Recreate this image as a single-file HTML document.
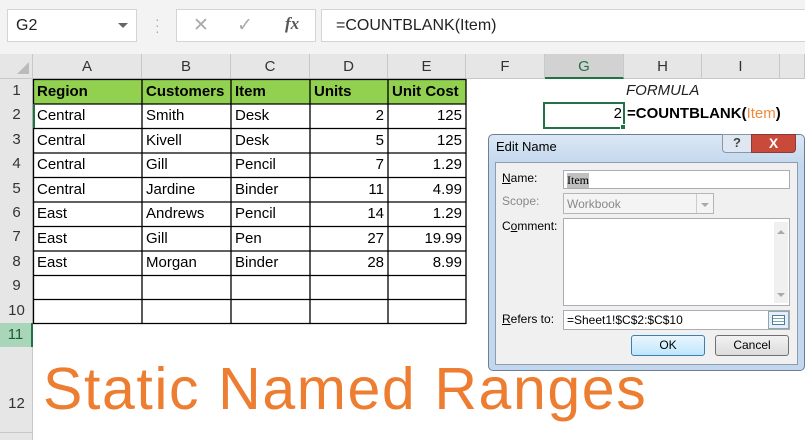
<!DOCTYPE html>
<html><head><style>
*{margin:0;padding:0;box-sizing:border-box}
body{width:805px;height:440px;overflow:hidden;background:#fff;font-family:"Liberation Sans",sans-serif;position:relative}
.a{position:absolute}
.hdr{background:#e6e6e6;color:#333;font-size:15px;text-align:center;border-right:1px solid #c8c8c8;border-bottom:1px solid #c8c8c8}
.c{position:absolute;font-size:15px;line-height:24px;white-space:nowrap;padding:0 4px;color:#000}
.r{text-align:right}
.g{font-weight:bold}
.dl{font-size:12px;color:#000;position:absolute}
</style></head><body>
<div class="a" style="left:0;top:0;width:805px;height:54px;background:#f3f3f3"></div>
<div class="a" style="left:7px;top:9px;width:130px;height:33px;background:#fff;border:1px solid #d4d4d4"></div>
<div class="a" style="left:16px;top:17px;font-size:16px;color:#222">G2</div>
<div class="a" style="left:118px;top:23px;width:0;height:0;border-left:5px solid transparent;border-right:5px solid transparent;border-top:5px solid #666"></div>
<div class="a" style="left:155px;top:16px;color:#aaa;font-size:14px;line-height:6px">·<br>·<br>·</div>
<div class="a" style="left:176px;top:9px;width:140px;height:33px;background:#fff;border:1px solid #d4d4d4"></div>
<div class="a" style="left:193px;top:14px;font-size:19px;color:#aaa">✕</div>
<div class="a" style="left:237px;top:14px;font-size:19px;color:#aaa">✓</div>
<div class="a" style="left:285px;top:14px;font-size:17px;color:#555;font-style:italic;font-family:'Liberation Serif',serif;font-weight:bold">fx</div>
<div class="a" style="left:321px;top:9px;width:490px;height:33px;background:#fff;border:1px solid #d4d4d4"></div>
<div class="a" style="left:336px;top:17px;font-size:16px;color:#222">=COUNTBLANK(Item)</div>
<div class="a hdr" style="left:0;top:54px;width:33px;height:25px"></div>
<div class="a" style="left:17px;top:62px;width:0;height:0;border-left:12px solid transparent;border-bottom:12px solid #bbb"></div>
<div class="a hdr" style="left:33px;top:54px;width:109px;height:25px;line-height:25px">A</div>
<div class="a hdr" style="left:142px;top:54px;width:89px;height:25px;line-height:25px">B</div>
<div class="a hdr" style="left:231px;top:54px;width:79px;height:25px;line-height:25px">C</div>
<div class="a hdr" style="left:310px;top:54px;width:78px;height:25px;line-height:25px">D</div>
<div class="a hdr" style="left:388px;top:54px;width:78px;height:25px;line-height:25px">E</div>
<div class="a hdr" style="left:466px;top:54px;width:79px;height:25px;line-height:25px">F</div>
<div class="a hdr" style="left:545px;top:54px;width:79px;height:25px;line-height:25px;background:#d2d2d2;border-bottom:2px solid #217346;color:#217346">G</div>
<div class="a hdr" style="left:624px;top:54px;width:78px;height:25px;line-height:25px">H</div>
<div class="a hdr" style="left:702px;top:54px;width:78px;height:25px;line-height:25px">I</div>
<div class="a hdr" style="left:780px;top:54px;width:25px;height:25px"></div>
<div class="a" style="left:0;top:79px;width:33px;height:361px;background:#e6e6e6;border-right:1px solid #c8c8c8"></div>
<div class="a" style="left:0;top:79px;width:33px;font-size:15px;color:#333;text-align:center;line-height:24.4px">1<br>2<br>3<br>4<br>5<br>6<br>7<br>8<br>9<br>10</div>
<div class="a" style="left:0;top:323px;width:33px;height:24px;background:#a9d5b8;border-right:2px solid #217346;text-align:center;font-size:15px;line-height:24px;color:#1a5e38">11</div>
<div class="a" style="left:0;top:395px;width:33px;text-align:center;font-size:15px;color:#333">12</div>
<div class="a" style="left:0;top:432px;width:33px;border-top:1px solid #c8c8c8"></div>
<div class="a" style="left:33px;top:79px;width:433px;height:25px;background:#92d050"></div>
<svg class="a" style="left:0;top:0" width="805" height="440">
<g stroke="#000" stroke-width="1.3" fill="none">
<path d="M33 79.5H466 M33 104H466 M33 128.5H466 M33 153H466 M33 177.5H466 M33 202H466 M33 226.5H466 M33 251H466 M33 275.5H466 M33 299.5H466 M33 323.5H466"/>
<path d="M33.5 79V324 M142 79V324 M231 79V324 M310 79V324 M388 79V324 M466 79V324"/>
</g>
<rect x="33" y="104" width="2" height="24" fill="#217346"/>
</svg>
<div class="c g" style="left:33px;top:80px">Region</div>
<div class="c g" style="left:142px;top:80px">Customers</div>
<div class="c g" style="left:231px;top:80px">Item</div>
<div class="c g" style="left:310px;top:80px">Units</div>
<div class="c g" style="left:388px;top:80px">Unit Cost</div>
<div class="c" style="left:33px;top:104px;line-height:24.5px">Central<br>Central<br>Central<br>Central<br>East<br>East<br>East</div>
<div class="c" style="left:142px;top:104px;line-height:24.5px">Smith<br>Kivell<br>Gill<br>Jardine<br>Andrews<br>Gill<br>Morgan</div>
<div class="c" style="left:231px;top:104px;line-height:24.5px">Desk<br>Desk<br>Pencil<br>Binder<br>Pencil<br>Pen<br>Binder</div>
<div class="c r" style="left:310px;width:78px;top:104px;line-height:24.5px">2<br>5<br>7<br>11<br>14<br>27<br>28</div>
<div class="c r" style="left:388px;width:78px;top:104px;line-height:24.5px">125<br>125<br>1.29<br>4.99<br>1.29<br>19.99<br>8.99</div>
<div class="a" style="left:626px;top:82px;font-size:15px;font-style:italic;color:#222">FORMULA</div>
<div class="a" style="left:543px;top:102px;width:82px;height:27px;border:2px solid #217346"></div>
<div class="a" style="left:620px;top:124px;width:6px;height:6px;background:#217346;border:1px solid #fff"></div>
<div class="a" style="left:545px;top:105px;width:77px;text-align:right;font-size:15px">2</div>
<div class="a" style="left:627px;top:105px;font-size:15px;font-weight:bold">=COUNTBLANK(<span style="color:#f08a3a;font-weight:normal">Item</span>)</div>
<div class="a" style="left:43px;top:355px;font-size:59px;color:#ed7d31;letter-spacing:1.6px;white-space:nowrap">Static Named Ranges</div>
<div class="a" style="left:488px;top:134px;width:317px;height:237px;background:linear-gradient(#dbe7f4,#c3d7ee 30px);border:1px solid #6a7f99;border-radius:5px"></div>
<div class="a" style="left:496px;top:139px;font-size:13px;color:#000">Edit Name</div>
<div class="a" style="left:722px;top:134px;width:30px;height:19px;background:#dfe8f2;border:1px solid #8896a8;border-radius:0 0 0 4px;text-align:center;font-size:13px;color:#444;font-weight:bold">?</div>
<div class="a" style="left:751px;top:134px;width:45px;height:19px;background:#c9493a;border:1px solid #8a3b33;border-radius:0 0 4px 0;text-align:center;font-size:14px;color:#fff;font-weight:bold">X</div>
<div class="a" style="left:495px;top:162px;width:303px;height:203px;background:#f0f0f0;border:1px solid #8d9cad"></div>
<div class="dl" style="left:502px;top:171px"><u>N</u>ame:</div>
<div class="a" style="left:563px;top:170px;width:227px;height:19px;background:#fff;border:1px solid #abadb3"></div>
<div class="a" style="left:567px;top:173px;font-size:12px;background:#c0c0c0;font-family:'Liberation Serif',serif">Item</div>
<div class="dl" style="left:502px;top:194px;color:#888">Scope:</div>
<div class="a" style="left:563px;top:193px;width:151px;height:21px;background:#f4f4f4;border:1px solid #b5b5b5"></div>
<div class="a" style="left:696px;top:194px;width:17px;height:19px;border-left:1px solid #ccc"></div>
<div class="a" style="left:701px;top:203px;border-left:4px solid transparent;border-right:4px solid transparent;border-top:4px solid #aaa"></div>
<div class="a" style="left:567px;top:197px;font-size:12px;color:#888">Workbook</div>
<div class="dl" style="left:502px;top:219px">C<u>o</u>mment:</div>
<div class="a" style="left:563px;top:218px;width:227px;height:88px;background:#fff;border:1px solid #abadb3"></div>
<div class="a" style="left:774px;top:222px;width:14px;height:81px;background:#f0f0f0"></div>
<div class="a" style="left:777px;top:230px;border-left:4px solid transparent;border-right:4px solid transparent;border-bottom:4px solid #aaa"></div>
<div class="a" style="left:777px;top:293px;border-left:4px solid transparent;border-right:4px solid transparent;border-top:4px solid #aaa"></div>
<div class="dl" style="left:502px;top:312px"><u>R</u>efers to:</div>
<div class="a" style="left:563px;top:310px;width:227px;height:20px;background:#fff;border:1px solid #abadb3"></div>
<div class="a" style="left:567px;top:313px;font-size:12px">=Sheet1!$C$2:$C$10</div>
<div class="a" style="left:768px;top:311px;width:21px;height:18px;background:#e8eef5;border:1px solid #8aa"></div>
<div class="a" style="left:772px;top:315px;width:13px;height:10px;border:1px solid #4a7ab0;background:repeating-linear-gradient(#fff 0 2px,#7aa 2px 3px)"></div>
<div class="a" style="left:631px;top:335px;width:74px;height:21px;background:linear-gradient(#eaf6fd,#bee6fd);border:1px solid #3c7fb1;border-radius:3px;text-align:center;font-size:12px;line-height:19px">OK</div>
<div class="a" style="left:715px;top:335px;width:74px;height:21px;background:linear-gradient(#f2f2f2,#dcdcdc);border:1px solid #707070;border-radius:3px;text-align:center;font-size:12px;line-height:19px">Cancel</div>
</body></html>
